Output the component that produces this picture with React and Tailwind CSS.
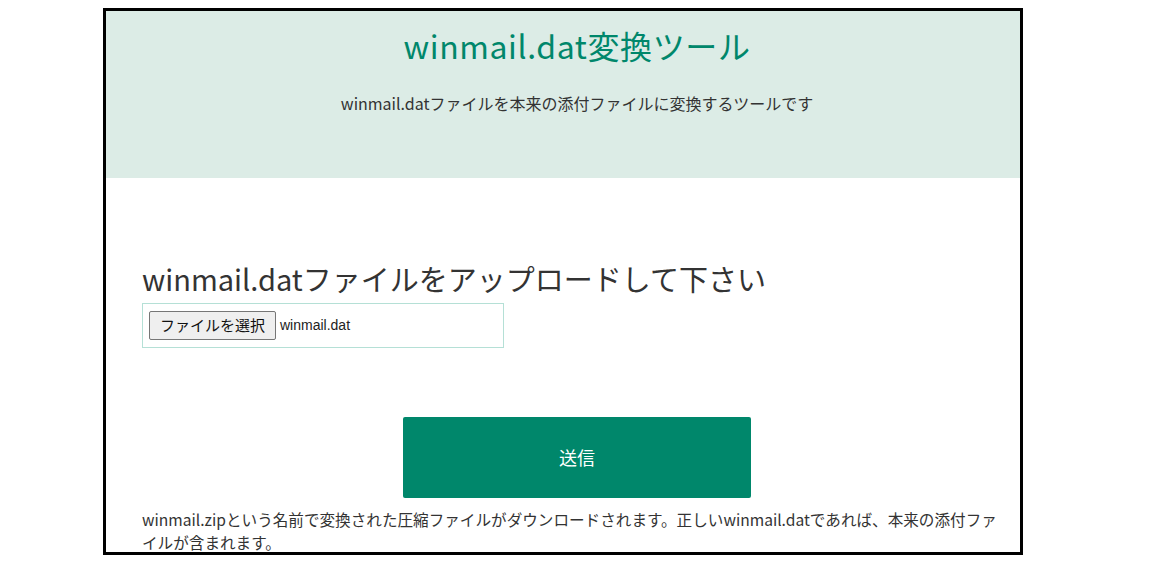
const App = () => {
  return (
    <div className="w-[1154px] h-[565px] bg-white pt-[8px]" style={{ fontFamily: '"Noto Sans CJK JP", "Noto Sans", sans-serif' }}>
      <div className="ml-[103px] w-[920px] h-[547px] border-[3px] border-black overflow-hidden flex flex-col">
        <header className="shrink-0 h-[167px] bg-[#dcece6] pl-[28px] flex flex-col items-center">
          <h1 className="mt-[14px] text-[32px] leading-[40px] text-[#00876b] tracking-[0.6px]">winmail.dat変換ツール</h1>
          <p className="mt-[27px] text-[16px] leading-[22px] text-[#333]">winmail.datファイルを本来の添付ファイルに変換するツールです</p>
        </header>
        <main className="pl-[36px] pr-[8px] pt-[82px] flex flex-col">
          <h2 className="text-[29px] leading-[36px] text-[#333]">winmail.datファイルをアップロードして下さい</h2>
          <div className="mt-[7px] w-[362px] h-[45px] shrink-0 border border-[#b5e0d6] flex items-center pl-[6px]">
            <button
              className="h-[29px] w-[127px] bg-[#efefef] border border-[#767676] rounded-[2px] text-[15px] text-[#111]"
              type="button"
            >
              ファイルを選択
            </button>
            <span className="ml-[4px] text-[14px] text-[#222]" style={{ fontFamily: '"Liberation Sans", Arial, sans-serif' }}>winmail.dat</span>
          </div>
          <div className="mt-[69px] shrink-0 flex justify-center">
            <button className="w-[348px] h-[81px] bg-[#00876b] rounded-[2px] text-white text-[18px]" type="button">
              送信
            </button>
          </div>
          <p className="mt-[10px] text-[15.6px] leading-[23px] text-[#333]">
            winmail.zipという名前で変換された圧縮ファイルがダウンロードされます。正しいwinmail.datであれば、本来の添付ファイルが含まれます。
          </p>
        </main>
      </div>
    </div>
  );
};
export default App;
